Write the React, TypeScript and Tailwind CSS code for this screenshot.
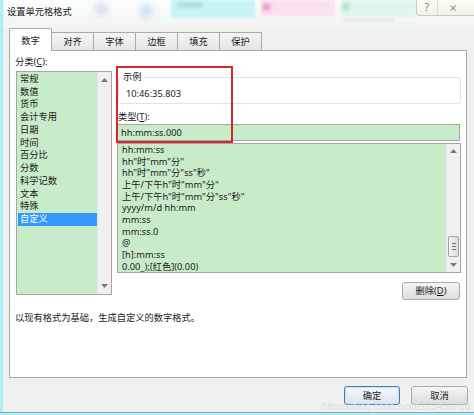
import React from 'react'

const categories = ['常规', '数值', '货币', '会计专用', '日期', '时间', '百分比', '分数', '科学记数', '文本', '特殊', '自定义']

const formats = [
  'hh:mm:ss',
  'hh"时"mm"分"',
  'hh"时"mm"分"ss"秒"',
  '上午/下午h"时"mm"分"',
  '上午/下午h"时"mm"分"ss"秒"',
  'yyyy/m/d hh:mm',
  'mm:ss',
  'mm:ss.0',
  '@',
  '[h]:mm:ss',
  '0.00_);[红色](0.00)',
]

const tabs = ['数字', '对齐', '字体', '边框', '填充', '保护']

function Arrow({ down }: { down?: boolean }) {
  return (
    <svg width="7" height="4" viewBox="0 0 7 4">
      <path d={down ? 'M0 0h7L3.5 4z' : 'M0 4h7L3.5 0z'} fill="#7a7a7a" />
    </svg>
  )
}

export default function App() {
  return (
    <div className="relative w-[474px] h-[415px] overflow-hidden flex flex-col bg-[#f0f0f0] font-['Noto_Sans','Noto_Sans_CJK_SC',sans-serif] text-[9.25px] text-[#1b1b1b]">
      <div className="flex flex-1">
        {/* window frame edge */}
        <div className="w-[4px] bg-[#aeeef5] border-r border-[#e6f4f6]" />

        <div className="flex-1 flex flex-col">
          {/* title bar */}
          <div className="relative h-[28px] flex justify-between bg-linear-to-b from-[#fbfdfd] to-[#f2f4f4]">
            <div className="absolute left-[90px] top-[2px] w-[14px] h-[14px] rounded-full bg-[#c9d6f0] blur-[3px] opacity-70" />
            <div className="absolute left-[136px] top-[4px] w-[12px] h-[14px] rounded-full bg-[#b9d5f2] blur-[3px] opacity-70" />
            <div className="absolute left-[167px] top-0 w-[84px] h-[18px] bg-[#c8f4f6] blur-[1px]" />
            <div className="absolute left-[174px] top-[3px] w-[24px] h-[4px] bg-[#9fd3d6] blur-[2px]" />
            <div className="absolute left-[257px] top-0 w-[74px] h-[16px] bg-[#fbe0f0] blur-[1px]" />
            <div className="absolute left-[259px] top-[4px] w-[7px] h-[6px] rounded-full bg-[#e27fb4] blur-[2px]" />
            <div className="absolute left-[337px] top-0 w-[76px] h-[17px] bg-[#e0f6ec] blur-[1px]" />
            <div className="absolute left-[339px] top-[4px] w-[6px] h-[6px] rounded-full bg-[#8fd8b4] blur-[2px]" />
            <div className="absolute left-[340px] top-[19px] w-[50px] h-[2px] bg-[#dedede] blur-[1px]" />

            <span className="relative ml-[3px] mt-[5px] leading-[14px]">设置单元格格式</span>
            <div className="relative flex h-[16px] border-l border-b border-[#c9c9c9] rounded-bl-[4px] bg-linear-to-b from-[#fdfdf4] to-[#f3f2e3]">
              <div className="w-[21px] flex items-center justify-center border-r border-[#dcdcd0] text-[10px] text-[#7a7a7a]">?</div>
              <div className="w-[36px] flex items-center justify-center pr-[6px] text-[10px] text-[#8a8a8a]">⨯</div>
            </div>
          </div>

          {/* tabs */}
          <div className="h-[22px] flex items-end pl-[5px]">
            {tabs.map((t, i) =>
              i === 0 ? (
                <div
                  key={t}
                  className="relative z-10 -mb-px w-[43px] h-[23px] flex items-center justify-center pt-[1px] bg-white border border-b-0 border-[#a9a9a9] rounded-t-[2px]"
                >
                  {t}
                </div>
              ) : (
                <div
                  key={t}
                  className="w-[42px] h-[18px] flex items-center justify-center bg-linear-to-b from-[#f4f4f4] to-[#e6e6e6] border border-l-0 border-b-0 border-[#a9a9a9]"
                >
                  {t}
                </div>
              )
            )}
          </div>

          {/* tab page */}
          <div className="ml-[5px] w-[458px] h-[328px] border border-[#a9a9a9] bg-white pt-[4px] pl-[6px] pr-[5px]">
            <div className="h-[14px] leading-[14px] -ml-px">
              分类(<span className="underline">C</span>):
            </div>

            <div className="mt-[2px] flex gap-[5px]">
              {/* category list */}
              <div className="w-[96px] h-[224px] flex border border-[#a6a6a6] bg-[#c8ebca]">
                <div className="flex-1 pt-px">
                  {categories.map(c => (
                    <div
                      key={c}
                      className={
                        c === '自定义'
                          ? 'ml-px h-[12.74px] leading-[12.74px] pl-[2px] bg-[#3399ff] text-white'
                          : 'ml-px h-[12.74px] leading-[12.74px] pl-[2px]'
                      }
                    >
                      {c}
                    </div>
                  ))}
                </div>
                <div className="w-[14px] flex flex-col items-center justify-between py-[6px] bg-[#f0f0f0] border-l border-[#e4e4e4]">
                  <Arrow />
                  <Arrow down />
                </div>
              </div>

              {/* right column */}
              <div className="w-[344px] flex flex-col">
                <div className="relative ml-px mt-[6px] h-[27px] border border-[#dde3e8] rounded-[3px]">
                  <span className="absolute -top-[7px] left-[2px] px-[2px] bg-white leading-[12px]">示例</span>
                  <div className="pl-[7px] pt-[10px] leading-[12px]">10:46:35.803</div>
                </div>

                <div className="ml-px mt-[7px] leading-[12px]">
                  类型(<span className="underline">T</span>):
                </div>

                <div className="mt-px w-[343px] h-[17px] flex items-center pl-[3px] border border-[#a6a6a6] bg-[#c8ebca]">
                  hh:mm:ss.000
                </div>

                <div className="mt-[2px] h-[130px] flex border border-[#a6a6a6] bg-[#c8ebca]">
                  <div className="flex-1 pl-[4px]">
                    {formats.map(f => (
                      <div key={f} className="h-[11.67px] leading-[11.67px] whitespace-nowrap">
                        {f}
                      </div>
                    ))}
                  </div>
                  <div className="w-[14px] flex flex-col items-center pt-[5px] pb-[5px] bg-[#f0f0f0] border-l border-[#e4e4e4]">
                    <Arrow />
                    <div className="mt-[83px] w-[11px] h-[21px] flex flex-col items-center justify-center gap-[2px] rounded-[2px] border border-[#a3a3a3] bg-linear-to-r from-[#f2f2f2] to-[#dcdcdc]">
                      <div className="w-[4px] h-px bg-[#777]" />
                      <div className="w-[4px] h-px bg-[#777]" />
                      <div className="w-[4px] h-px bg-[#777]" />
                    </div>
                    <div className="mt-auto">
                      <Arrow down />
                    </div>
                  </div>
                </div>

                <button className="self-end mr-px mt-[9px] w-[58px] h-[18px] flex items-center justify-center rounded-[3px] border border-[#a9a9a9] bg-linear-to-b from-[#f5f5f5] to-[#dddddd]">
                  删除(<span className="underline">D</span>)
                </button>
              </div>
            </div>

            <div className="mt-[11px] -ml-px leading-[14px]">以现有格式为基础，生成自定义的数字格式。</div>
          </div>

          {/* dialog buttons */}
          <div className="mt-[8px] flex justify-end gap-[11px] pr-[6px]">
            <button className="w-[56px] h-[19px] flex items-center justify-center rounded-[3px] border border-[#3c7fb1] bg-linear-to-b from-[#f3f8fb] to-[#dde5eb] shadow-[inset_0_0_0_1px_#c6e4f5] leading-[11px]">
              确定
            </button>
            <button className="w-[57px] h-[19px] flex items-center justify-center rounded-[3px] border border-[#a9a9a9] bg-linear-to-b from-[#f5f5f5] to-[#dddddd] leading-[11px]">
              取消
            </button>
          </div>
        </div>
      </div>

      {/* frame bottom */}
      <div className="h-px bg-[#8eaab0]" />
      <div className="h-[2px] bg-[#aeeef5]" />

      {/* watermark */}
      <div className="absolute right-[4px] bottom-[3px] text-[10px] leading-[10px] text-[#d4dadd] opacity-80 font-['Liberation_Sans',sans-serif]">
        https://blog.csdn.net/a123456789
      </div>

      {/* red annotation box */}
      <div className="absolute left-[116px] top-[66px] w-[117px] h-[77px] border-2 border-[#d8262d]" />
    </div>
  )
}
